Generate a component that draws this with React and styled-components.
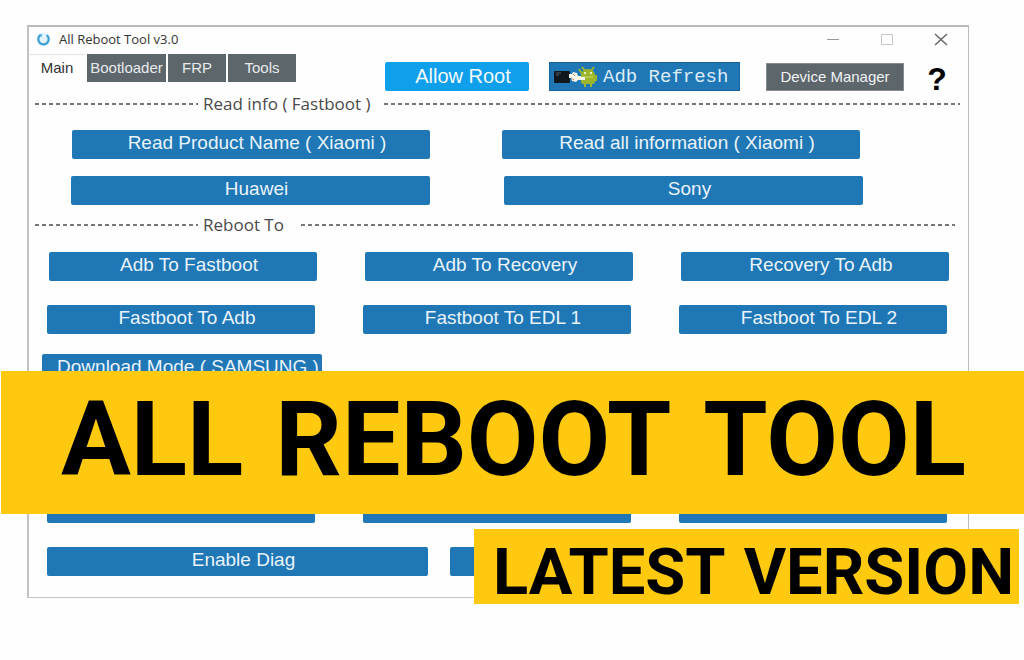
import React from "react";
import styled, { createGlobalStyle } from "styled-components";

const BLUE = "#1f77b5";
const YELLOW = "#fec90f";
const GREY = "#5d666b";

const GlobalStyle = createGlobalStyle`
  * { box-sizing: border-box; }
  body {
    margin: 0;
    background: #fefefe;
    font-family: "Liberation Sans", Arial, sans-serif;
  }
  button { font-family: inherit; margin: 0; border: 0; cursor: pointer; }
`;

const Stage = styled.div`
  position: relative;
  padding: 25px 55px 61px 27px;
  overflow: hidden;
`;

const AppWindow = styled.main`
  border: 1px solid #bcbcbc;
  border-top: 2px solid #bababa;
  border-left: 2px solid #c2c2c2;
  border-bottom-color: #c4c4c4;
  background: #fefefe;
  padding-bottom: 21px;
`;

const TitleBar = styled.header`
  display: flex;
  align-items: center;
  height: 27px;
  padding: 0 19px 3px 7px;
`;

const Title = styled.h1`
  flex: 1;
  margin: 0 0 0 8px;
  font: 400 13px/20px "Open Sans", sans-serif;
  color: #333;
`;

const WindowControls = styled.div`
  display: flex;
  gap: 38px;
`;

const WindowButton = styled.button`
  display: flex;
  width: 16px;
  height: 16px;
  padding: 0;
  background: none;
`;

const Toolbar = styled.div`
  display: flex;
  align-items: flex-start;
  justify-content: space-between;
  height: 40px;
  padding-right: 20px;
`;

const Tabs = styled.nav`
  display: flex;
  gap: 2px;
`;

const Tab = styled.button`
  width: ${(p) => p.$width}px;
  height: 28px;
  padding: 0;
  font-size: 15px;
  line-height: 28px;
  color: ${(p) => (p.$active ? "#333" : "#e8ebec")};
  background: ${(p) => (p.$active ? "transparent" : GREY)};
  box-shadow: ${(p) => (p.$active ? "inset 0 1px #e4e4e4" : "none")};
`;

const Actions = styled.div`
  display: flex;
  align-items: center;
  padding-top: 8px;
`;

const AllowRoot = styled.button`
  width: 144px;
  height: 29px;
  padding: 0 0 2px 12px;
  margin-right: 20px;
  border-radius: 2px;
  background: #109feb;
  color: #f2faff;
  font-size: 20px;
  line-height: 26px;
`;

const AdbRefresh = styled.button`
  display: flex;
  align-items: center;
  gap: 6px;
  width: 191px;
  height: 29px;
  padding: 0 0 0 4px;
  margin-right: 26px;
  border: 1px solid #17649c;
  background: ${BLUE};
  color: #dcecf8;
  font: 400 19px/26px "Liberation Mono", monospace;
  white-space: nowrap;
`;

const DeviceManager = styled.button`
  width: 138px;
  height: 28px;
  padding: 0;
  margin-right: 22px;
  border: 1px solid #858b8f;
  background: ${GREY};
  color: #f0f2f3;
  font-size: 15px;
  line-height: 26px;
`;

const Help = styled.button`
  width: 22px;
  height: 28px;
  padding: 0;
  background: none;
  color: #000;
  font-size: 32px;
  font-weight: 700;
  line-height: 32px;
`;

const SectionTitle = styled.h2`
  display: flex;
  align-items: center;
  gap: 5px;
  height: 20px;
  margin: ${(p) => p.$top}px 0 0;
  padding: 0 ${(p) => p.$right}px 0 6px;
  font: 400 17px/20px "Open Sans", sans-serif;
  color: #4a4a4a;
  white-space: nowrap;

  &::before,
  &::after {
    content: "";
    height: 2px;
    background: repeating-linear-gradient(90deg, #777 0 4px, transparent 4px 7px);
  }
  &::before { width: 163px; }
  &::after { flex: 1; margin-left: ${(p) => p.$gap}px; }
`;

const Row = styled.div`
  display: grid;
  grid-template-columns: ${(p) => p.$columns};
  column-gap: ${(p) => p.$gap}px;
  margin-top: ${(p) => p.$top}px;
  padding: 0 ${(p) => p.$right}px 0 ${(p) => p.$left}px;
`;

const CommandButton = styled.button`
  height: 29px;
  padding: 0 0 4px 12px;
  border-radius: 2px;
  background: ${BLUE};
  color: #e8f3fb;
  font-size: 19px;
  line-height: 24px;
  white-space: nowrap;
`;

const Banner = styled.div`
  position: absolute;
  top: 371px;
  left: 1px;
  right: 0;
  height: 143px;
  padding-left: 2px;
  background: ${YELLOW};
  display: flex;
  justify-content: center;
  gap: 32px;
  color: #000;
  font: 700 104px/138px Roboto, sans-serif;
  white-space: nowrap;
`;

const SubBanner = styled(Banner)`
  top: 529px;
  left: auto;
  right: 5px;
  width: 545px;
  height: 75px;
  padding-left: 14px;
  gap: 18px;
  font-size: 65px;
  line-height: 86px;
`;

const AppIcon = () => (
  <svg width="15" height="15" viewBox="0 0 15 15" aria-hidden="true">
    <circle cx="7.5" cy="7.5" r="7" fill="#e3f3fb" />
    <path d="M4.3 3.1a5.2 5.2 0 1 0 6.4 0" fill="none" stroke="#3aa0d2" strokeWidth="2.2" />
    <path d="M2.6 2.6l3.6-.5-.6 3.2z" fill="#4fb1de" />
  </svg>
);

const AdbIcon = () => (
  <svg width="43" height="22" viewBox="0 0 43 22" aria-hidden="true">
    <rect x="0" y="5" width="16" height="12" rx="1" fill="#11181d" />
    <path d="M2 7h5M2 9h3" stroke="#52616b" />
    <path d="M15 8h3l1-2 4 1 1 3h5v4h-5l-2 2-4-1-1-3h-2z" fill="#f7f4ee" />
    <path d="M17 12l3 2M19 8l2 2" stroke="#c98d5a" />
    <path d="M27 8c1-3 4-5 7-5s6 2 7 5v8c0 1-1 2-2 2H29c-1 0-2-1-2-2z" fill="#9bb62d" />
    <path d="M28 1l3 4M40 1l-3 4M25 3l4 6M31 18v3M37 18v3M42 9v6" stroke="#9bb62d" strokeWidth="2" />
    <path d="M29 11h10" stroke="#c8db6e" />
    <circle cx="31" cy="7" r="1" fill="#fff" />
    <circle cx="37" cy="7" r="1" fill="#fff" />
    <path d="M23 11h8v3h-8z" fill="#f7f4ee" />
  </svg>
);

export default function App() {
  return (
    <>
      <GlobalStyle />
      <Stage>
        <AppWindow>
          <TitleBar>
            <AppIcon />
            <Title>All Reboot Tool v3.0</Title>
            <WindowControls>
              <WindowButton aria-label="Minimize">
                <svg width="16" height="16" viewBox="0 0 16 16">
                  <path d="M2 8.5h12" stroke="#999" />
                </svg>
              </WindowButton>
              <WindowButton aria-label="Maximize">
                <svg width="16" height="16" viewBox="0 0 16 16">
                  <path d="M2.5 3.5h11v10h-11z" fill="none" stroke="#c4c4c4" />
                </svg>
              </WindowButton>
              <WindowButton aria-label="Close">
                <svg width="16" height="16" viewBox="0 0 16 16">
                  <path d="M2 3l12 11M14 3L2 14" stroke="#666" strokeWidth="1.5" />
                </svg>
              </WindowButton>
            </WindowControls>
          </TitleBar>

          <Toolbar>
            <Tabs>
              <Tab $active $width={56}>Main</Tab>
              <Tab $width={79}>Bootloader</Tab>
              <Tab $width={58}>FRP</Tab>
              <Tab $width={68}>Tools</Tab>
            </Tabs>
            <Actions>
              <AllowRoot>Allow Root</AllowRoot>
              <AdbRefresh>
                <AdbIcon />
                Adb Refresh
              </AdbRefresh>
              <DeviceManager>Device Manager</DeviceManager>
              <Help>?</Help>
            </Actions>
          </Toolbar>

          <SectionTitle $top={0} $right={8} $gap={8}>Read info ( Fastboot )</SectionTitle>
          <Row $columns="1fr 1fr" $gap={72} $top={16} $left={43} $right={108}>
            <CommandButton>Read Product Name ( Xiaomi )</CommandButton>
            <CommandButton>Read all information ( Xiaomi )</CommandButton>
          </Row>
          <Row $columns="1fr 1fr" $gap={74} $top={17} $left={42} $right={105}>
            <CommandButton>Huawei</CommandButton>
            <CommandButton>Sony</CommandButton>
          </Row>

          <SectionTitle $top={10} $right={13} $gap={12}>Reboot To</SectionTitle>
          <Row $columns="1fr 1fr 1fr" $gap={48} $top={17} $left={20} $right={19}>
            <CommandButton>Adb To Fastboot</CommandButton>
            <CommandButton>Adb To Recovery</CommandButton>
            <CommandButton>Recovery To Adb</CommandButton>
          </Row>
          <Row $columns="1fr 1fr 1fr" $gap={48} $top={24} $left={18} $right={21}>
            <CommandButton>Fastboot To Adb</CommandButton>
            <CommandButton>Fastboot To EDL 1</CommandButton>
            <CommandButton>Fastboot To EDL 2</CommandButton>
          </Row>
          <Row $columns="280fr 632fr" $gap={0} $top={20} $left={13} $right={14}>
            <CommandButton>Download Mode ( SAMSUNG )</CommandButton>
          </Row>

          <Row $columns="1fr 1fr 1fr" $gap={48} $top={111} $left={18} $right={21}>
            <CommandButton aria-label="Command 1" />
            <CommandButton aria-label="Command 2" />
            <CommandButton aria-label="Command 3" />
          </Row>
          <Row $columns="381fr 498fr" $gap={22} $top={24} $left={18} $right={20}>
            <CommandButton>Enable Diag</CommandButton>
            <CommandButton aria-label="Diag options" />
          </Row>
        </AppWindow>

        <Banner>
          <span>ALL</span>
          <span>REBOOT</span>
          <span>TOOL</span>
        </Banner>
        <SubBanner>
          <span>LATEST</span>
          <span>VERSION</span>
        </SubBanner>
      </Stage>
    </>
  );
}
